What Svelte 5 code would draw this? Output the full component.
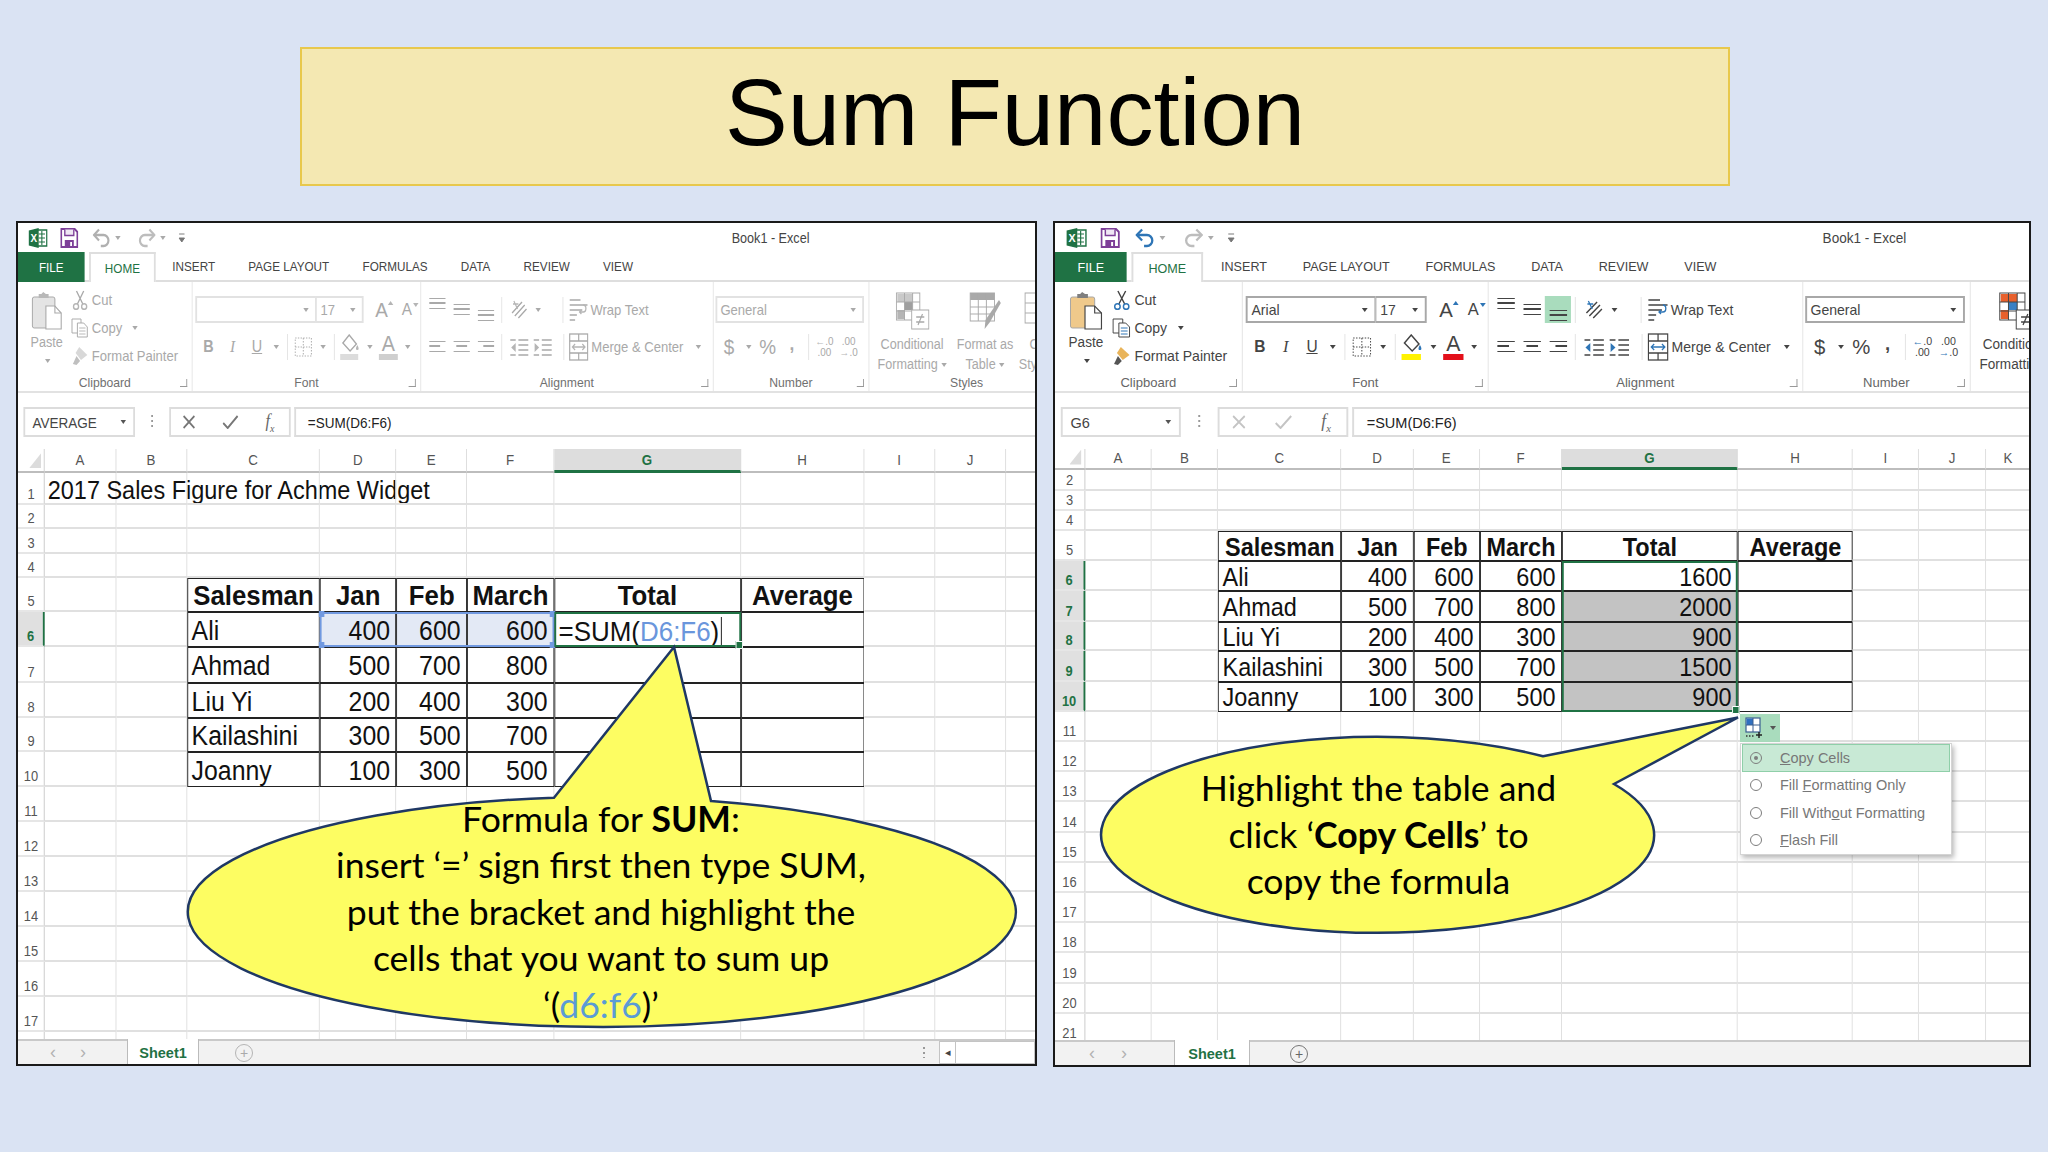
<script>
  const table = [
    ['Salesman', 'Jan', 'Feb', 'March', 'Total', 'Average'],
    ['Ali', 400, 600, 600, 1600],
    ['Ahmad', 500, 700, 800, 2000],
    ['Liu Yi', 200, 400, 300, 900],
    ['Kailashini', 300, 500, 700, 1500],
    ['Joanny', 100, 300, 500, 900]
  ];

  const leftWin = {
    id: 'left',
    off: true,
    gx: 0.92,
    head: 24,
    name: 'AVERAGE',
    fontName: '',
    labels: 'ABCDEFGHIJ ',
    cols: [27, 71, 71, 133, 76.5, 70.5, 87, 187, 123, 71, 71, 31],
    rows: [[1, 32], [2, 24], [3, 24.5], [4, 24], [5, 34.5], [6, 35], [7, 35.5], [8, 35], [9, 34.5], [10, 35], [11, 35], [12, 35], [13, 35], [14, 34.5], [15, 35], [16, 35.5], [17, 35], [18, 35]],
    selRows: [6],
    selCol: 6,
    box: '7 / 8 / 8 / 9',
    tabLeft: 109,
    nav: [32, 62]
  };

  const rightWin = {
    id: 'right',
    off: false,
    gx: 0.92,
    head: 20.5,
    name: 'G6',
    fontName: 'Arial',
    labels: 'ABCDEFGHIJK',
    cols: [30, 67, 66, 123.6, 72, 66.4, 82, 176, 115, 66, 67, 45],
    rows: [[2, 21], [3, 20.5], [4, 20], [5, 30], [6, 30.4], [7, 30.2], [8, 29.8], [9, 30.2], [10, 30.4], [11, 30], [12, 30], [13, 30.4], [14, 30.2], [15, 30.2], [16, 30.2], [17, 30], [18, 30], [19, 30.6], [20, 30.4], [21, 30]],
    selRows: [6, 7, 8, 9, 10],
    selCol: 6,
    box: '6 / 8 / 11 / 9',
    tabLeft: 119,
    nav: [34, 66]
  };

  function cellsFor(w) {
    const out = [];
    w.rows.forEach(([n], i) => {
      const r = i + 2;
      const t = n >= 5 && n <= 10 ? table[n - 5] : null;
      out.push({ key: 'h' + n, r, c: 1, cls: 'rh' + (w.selRows.includes(n) ? ' picked' : ''), text: n });
      w.cols.forEach((_, j) => {
        let cls = 'cell';
        let text = '';
        let formula = false;
        if (t && j >= 2 && j <= 7) {
          text = t[j - 2] ?? '';
          cls += ' tb';
          if (n === 5) cls += ' hd';
          else if (j === 2) cls += ' nm';
          else cls += ' num';
          if (w.off && j === 6 && n !== 5) text = '';
          if (w.off && n === 6 && j === 6) { formula = true; cls += ' fm'; }
          if (w.off && n === 6 && j >= 3 && j <= 5) cls += ' lit';
          if (!w.off && n >= 7 && j === 6) cls += ' grey';
        }
        if (w.off && n === 1 && j === 0) { text = '2017 Sales Figure for Achme Widget'; cls += ' ttl'; }
        out.push({ key: n + '-' + j, r, c: j + 2, cls, text, formula });
      });
    });
    return out;
  }

  const px = (list) => list.join('px ') + 'px';
</script>

{#snippet excel(w)}
  <section class="win {w.id}" class:off={w.off} class:on={!w.off}>
    <div class="chrome">
      <div class="titlebar">
        <div class="qat">
          <svg class="xl" width="22" height="20" viewBox="0 0 22 20">
            <rect x="8" y="2" width="13" height="16" fill="#fff" stroke="#1f7244" stroke-width="1.5" />
            <path d="M12 6h7M12 10h7M12 14h7M15.5 3v14" stroke="#1f7244" stroke-width="1.2" />
            <path d="M1 2.5 12 0v20L1 17.5z" fill="#1f7244" />
            <text x="6.5" y="14" font-size="11" font-weight="700" fill="#fff" text-anchor="middle">X</text>
          </svg>
          <svg class="save" width="20" height="20" viewBox="0 0 20 20">
            <path d="M1 1h15l3 3v15H1z" fill="#fff" stroke="#7d3f98" stroke-width="2" />
            <path d="M5 1.5v6h10v-6" fill="#efe6f3" stroke="#7d3f98" stroke-width="1.5" />
            <rect x="5" y="12" width="10" height="7" fill="#7d3f98" />
            <rect x="11" y="14" width="2" height="4" fill="#fff" />
          </svg>
          <svg class="undo" width="20" height="20" viewBox="0 0 20 20">
            <path d="M2 7h10a5 5 0 0 1 0 11H9" fill="none" stroke="currentColor" stroke-width="2.4" />
            <path d="M7 1.5 1.5 7 7 12.5" fill="none" stroke="currentColor" stroke-width="2.4" />
          </svg>
          <i class="arr tiny"></i>
          <svg class="redo" width="20" height="20" viewBox="0 0 20 20">
            <path d="M18 7H8a5 5 0 0 0 0 11h3" fill="none" stroke="currentColor" stroke-width="2.4" />
            <path d="M13 1.5 18.5 7 13 12.5" fill="none" stroke="currentColor" stroke-width="2.4" />
          </svg>
          <i class="arr tiny"></i>
          <svg class="cust" width="8" height="12" viewBox="0 0 8 12">
            <path d="M1 2h6M1 6h6l-3 4z" fill="#777" stroke="#777" />
          </svg>
        </div>
        <span class="doc">Book1 - Excel</span>
      </div>

      <nav class="tabs">
        <span class="file">FILE</span>
        <span class="home">HOME</span>
        <span>INSERT</span>
        <span>PAGE LAYOUT</span>
        <span>FORMULAS</span>
        <span>DATA</span>
        <span>REVIEW</span>
        <span>VIEW</span>
      </nav>

      <div class="ribbon">
        <div class="group clip">
          <div class="g-body clip-body">
            <div class="paste">
              <svg width="38" height="38" viewBox="0 0 38 38">
                <rect x="2" y="5" width="25" height="31" rx="2" class="board" />
                <path d="M9 6V2h3l2-2 3 2h3v4z" class="clipper" />
                <path d="M17 14h10l7 7v16H17z" fill="#fff" stroke="currentColor" stroke-width="1.2" />
                <path d="M27 14v7h7" fill="none" stroke="currentColor" stroke-width="1.2" />
              </svg>
              <span>Paste</span>
              <i class="arr"></i>
            </div>
            <div class="clip-rows">
              <div class="crow">
                <svg width="20" height="20" viewBox="0 0 20 20">
                  <path d="M6 1l7 13M14 1 7 14" stroke="currentColor" stroke-width="1.5" fill="none" />
                  <circle cx="5.5" cy="16.5" r="2.8" fill="none" stroke="var(--blue)" stroke-width="1.5" />
                  <circle cx="14.5" cy="16.5" r="2.8" fill="none" stroke="var(--blue)" stroke-width="1.5" />
                </svg>
                Cut
              </div>
              <div class="crow">
                <svg width="20" height="20" viewBox="0 0 20 20">
                  <path d="M1 1h10v14H1z" fill="#fff" stroke="currentColor" />
                  <path d="M7 5h7l4 4v10H7z" fill="#fff" stroke="currentColor" />
                  <path d="M9 10h7M9 13h7M9 16h7" stroke="var(--blue)" />
                </svg>
                Copy <i class="arr copy-arr"></i>
              </div>
              <div class="crow">
                <svg width="20" height="20" viewBox="0 0 20 20">
                  <path d="M9 1l9 8-7 5-6-7z" class="brush" />
                  <path d="M6 10l4 5-4 4-4-1z" class="brush-2" />
                </svg>
                Format Painter
              </div>
            </div>
          </div>
          <div class="g-label">Clipboard<i class="launch"></i></div>
        </div>

        <div class="group font">
          <div class="g-body g-rows">
            <div class="irow first">
              <div class="box fname"><span>{w.fontName}</span><i class="arr"></i></div>
              <div class="box fsize"><span>17</span><i class="arr"></i></div>
              <span class="aa big">A<b class="tip"></b></span>
              <span class="aa small">A<b class="tip down"></b></span>
            </div>
            <div class="irow">
              <span class="t27 strong">B</span>
              <span class="t27 em">I</span>
              <span class="t27 und">U</span>
              <span class="t16"><i class="arr"></i></span>
              <i class="sep"></i>
              <span class="t30">
                <svg width="20" height="20" viewBox="0 0 20 20">
                  <rect x="1" y="1" width="18" height="18" fill="none" stroke="currentColor" stroke-dasharray="1.5 1.5" />
                  <path d="M10 1v18M1 10h18" stroke="currentColor" stroke-dasharray="1.5 1.5" />
                </svg>
              </span>
              <span class="t16"><i class="arr"></i></span>
              <i class="sep"></i>
              <span class="t30">
                <svg width="24" height="26" viewBox="0 0 24 26">
                  <path d="M11 1l8 9-7 7-8-8z" fill="#fff" stroke="currentColor" stroke-width="1.5" />
                  <path d="M20 11c2 3 2 5 0 5s-2-2 0-5z" fill="var(--blue)" />
                  <rect x="1" y="20" width="20" height="6" fill="var(--yellow)" />
                </svg>
              </span>
              <span class="t16"><i class="arr"></i></span>
              <span class="t27 col-a">A<b class="red-bar"></b></span>
              <span class="t16"><i class="arr"></i></span>
            </div>
          </div>
          <div class="g-label">Font<i class="launch"></i></div>
        </div>

        <div class="group align">
          <div class="g-body g-rows">
            <div class="irow">
              <span class="t27"><i class="lines top"></i></span>
              <span class="t27"><i class="lines"></i></span>
              <span class="t27" class:hi={!w.off}><i class="lines low"></i></span>
              <i class="sep wide"></i>
              <span class="t27">
                <svg width="22" height="22" viewBox="0 0 22 22">
                  <path d="M3 14 14 3M6 17 17 6M10 19l9-9" stroke="currentColor" stroke-width="1.5" fill="none" />
                  <path d="M4 5h6M5 2l4 8" stroke="var(--blue)" stroke-width="1.3" fill="none" />
                </svg>
              </span>
              <span class="t16"><i class="arr"></i></span>
              <i class="sep wide2"></i>
              <span class="wrap-ic">
                <svg width="22" height="24" viewBox="0 0 22 24">
                  <path d="M2 2h12M2 7h20M2 12h14M2 17h8M2 22h6" stroke="currentColor" stroke-width="1.5" fill="none" />
                  <path d="M17 7c4 0 4 7 0 7h-4m2-2-2 2 2 2" stroke="var(--blue)" stroke-width="1.4" fill="none" />
                </svg>
              </span>
              <span class="lbl">Wrap Text</span>
            </div>
            <div class="irow">
              <span class="t27"><i class="lines left-a"></i></span>
              <span class="t27"><i class="lines mid-a"></i></span>
              <span class="t27"><i class="lines right-a"></i></span>
              <i class="sep wide"></i>
              <span class="t27">
                <svg width="22" height="18" viewBox="0 0 22 18">
                  <path d="M10 2h11M10 7h11M10 12h11M10 17h11M1 2h6M1 17h6" stroke="currentColor" stroke-width="1.4" />
                  <path d="M7 5 2 9.5 7 14z" fill="var(--blue)" />
                </svg>
              </span>
              <span class="t27 ind">
                <svg width="22" height="18" viewBox="0 0 22 18">
                  <path d="M10 2h11M10 7h11M10 12h11M10 17h11M1 2h6M1 17h6" stroke="currentColor" stroke-width="1.4" />
                  <path d="M2 5l5 4.5L2 14z" fill="var(--blue)" />
                </svg>
              </span>
              <i class="sep wide3"></i>
              <span class="wrap-ic">
                <svg width="22" height="28" viewBox="0 0 22 28">
                  <rect x="1" y="1" width="20" height="26" fill="none" stroke="currentColor" stroke-width="1.3" />
                  <path d="M1 8h20M1 20h20M11 1v7M11 20v7" stroke="currentColor" stroke-width="1.3" />
                  <path d="M4 14h14M7 11l-3 3 3 3M15 11l3 3-3 3" stroke="var(--blue)" stroke-width="1.3" fill="none" />
                </svg>
              </span>
              <span class="lbl">Merge &amp; Center</span>
              <i class="arr merge-arr"></i>
            </div>
          </div>
          <div class="g-label">Alignment<i class="launch"></i></div>
        </div>

        <div class="group number">
          <div class="g-body g-rows">
            <div class="irow">
              <div class="box general"><span>General</span><i class="arr"></i></div>
            </div>
            <div class="irow">
              <span class="t27 cash">$</span>
              <span class="t16"><i class="arr"></i></span>
              <span class="t27 cash">%</span>
              <span class="t27 cash cm">,</span>
              <i class="sep"></i>
              <span class="dec"><b><em>←</em>.0</b><b>.00</b></span>
              <span class="dec"><b>.00</b><b><em>→</em>.0</b></span>
            </div>
          </div>
          <div class="g-label">Number<i class="launch"></i></div>
        </div>

        <div class="group styles">
          <div class="g-body style-row">
            <div class="sty">
              <svg width="38" height="38" viewBox="0 0 38 38">
                <rect x="1" y="1" width="26" height="27" fill="#fff" stroke="currentColor" />
                <rect x="2" y="2" width="8" height="8" class="c1" />
                <rect x="10" y="10" width="9" height="8" class="c2" />
                <rect x="10" y="2" width="9" height="8" class="c1" />
                <rect x="2" y="18" width="8" height="9" class="c3" />
                <path d="M10 1v27M19 1v27M1 10h26M1 19h26" stroke="currentColor" />
                <rect x="18" y="18" width="19" height="19" fill="#fff" stroke="currentColor" />
                <path d="M23 25h9M23 30h9M30 22l-5 11" stroke="currentColor" stroke-width="1.3" fill="none" />
              </svg>
              <span>Conditional</span>
              <span>Formatting <i class="arr inline"></i></span>
            </div>
            <div class="sty">
              <svg width="38" height="38" viewBox="0 0 38 38">
                <rect x="2" y="1" width="27" height="28" fill="#fff" stroke="currentColor" />
                <rect x="2" y="1" width="27" height="7" fill="currentColor" />
                <path d="M11 1v28M20 1v28M2 15h27M2 22h27" stroke="currentColor" />
                <path d="M34 8 36 11 24 30 18 37l1-9z" fill="currentColor" />
              </svg>
              <span>Format as</span>
              <span>Table <i class="arr inline"></i></span>
            </div>
            <div class="sty narrow">
              <svg width="38" height="38" viewBox="0 0 38 38">
                <rect x="2" y="1" width="34" height="30" fill="#fff" stroke="currentColor" />
                <path d="M2 11h34M2 21h34M18 1v30" stroke="currentColor" />
              </svg>
              <span>Cell</span>
              <span>Styles <i class="arr inline"></i></span>
            </div>
          </div>
          <div class="g-label">Styles</div>
        </div>
      </div>

      <div class="formula">
        <div class="namebox"><span>{w.name}</span><i class="arr dark"></i></div>
        <i class="dots"></i>
        <div class="btns">
          <svg class="x" width="14" height="14" viewBox="0 0 14 14"><path d="M1 1l12 12M13 1 1 13" stroke="currentColor" stroke-width="1.8" /></svg>
          <svg class="x" width="18" height="14" viewBox="0 0 18 14"><path d="M1 8l5 5L17 1" fill="none" stroke="currentColor" stroke-width="2" /></svg>
          <span class="fx">f<sub>x</sub></span>
        </div>
        <div class="input">=SUM(D6:F6)</div>
      </div>
    </div>

    <div class="sheet">
      <div class="grid" style="--gx:{w.gx}; grid-template-columns:{px(w.cols.map((c) => c / w.gx))}; grid-template-rows:{w.head}px {px(w.rows.map((r) => r[1]))}">
        <div class="corner" style="grid-area:1 / 1"><i></i></div>
        {#each w.cols as _, j}
          <div class="ch" class:picked={j === w.selCol} style="grid-area:1 / {j + 2}">{w.labels[j] ?? ''}</div>
        {/each}
        {#each cellsFor(w) as cell (cell.key)}
          <div class={cell.cls} style="grid-area:{cell.r} / {cell.c}">
            {#if cell.formula}
              <span class="fml">=SUM(<span class="ref">D6:F6</span>)<i class="caret"></i></span>
            {:else}
              {cell.text}
            {/if}
          </div>
        {/each}
        {#if w.off}
          <div class="refbox" style="grid-area:7 / 5 / 8 / 8">
            <i class="nub tl"></i><i class="nub tr"></i><i class="nub bl"></i><i class="nub br"></i>
          </div>
        {/if}
        <div class="selbox" style="grid-area:{w.box}"><i class="grip"></i></div>
      </div>
    </div>

    <footer class="sheetbar">
      <div class="navs" style="width:{w.tabLeft}px">
        <span style="left:{w.nav[0]}px" class="nv">‹</span>
        <span style="left:{w.nav[1]}px" class="nv">›</span>
      </div>
      <div class="tab">Sheet1</div>
      <span class="plus">+</span>
      {#if w.off}
        <div class="hscroll"><i></i><span class="sl">◂</span><span class="thumb"></span></div>
      {/if}
    </footer>

    {#if w.off}
      <div class="callout big-call">
        <svg width="828" height="230" viewBox="0 0 828 230">
          <path d="M367 0.7 L487 -150 L524 4 A414 115 0 1 1 367 0.7 Z" />
        </svg>
        <p>Formula for <b>SUM</b>:<br />insert ‘=’ sign first then type SUM,<br />put the bracket and highlight the<br />cells that you want to sum up<br />‘(<span class="link">d6:f6</span>)’</p>
      </div>
    {:else}
      <div class="fillopts">
        <div class="fillbtn">
          <svg width="20" height="22" viewBox="0 0 20 22">
            <rect x="1" y="1" width="14" height="14" fill="#fff" stroke="#3b5f8f" stroke-width="1.2" />
            <rect x="1.5" y="1.5" width="6.5" height="6.5" fill="#2f6fc0" />
            <path d="M8 1v14M1 8h14" stroke="#3b5f8f" />
            <path d="M14 15v6M11 18h6" stroke="#222" stroke-width="1.5" />
            <path d="M1 19h8" stroke="#333" stroke-dasharray="1.5 1.5" stroke-width="1.5" />
          </svg>
          <i class="arr dark"></i>
        </div>
        <ul class="menu">
          <li class="active"><i class="radio"></i><span><u>C</u>opy Cells</span></li>
          <li><i class="radio"></i><span>Fill <u>F</u>ormatting Only</span></li>
          <li><i class="radio"></i><span>Fill With<u>o</u>ut Formatting</span></li>
          <li><i class="radio"></i><span><u>F</u>lash Fill</span></li>
        </ul>
      </div>
      <div class="callout small-call">
        <svg width="553" height="196" viewBox="0 0 553 196">
          <path d="M441 19.3 L636 -19.5 L512 47 A276.5 98 0 1 1 441 19.3 Z" />
        </svg>
        <p>Highlight the table and<br />click ‘<b>Copy Cells</b>’ to<br />copy the formula</p>
      </div>
    {/if}
  </section>
{/snippet}

<main class="slide">
  <header class="banner"><h1>Sum Function</h1></header>
  <div class="pair">
    {@render excel(leftWin)}
    {@render excel(rightWin)}
  </div>
</main>

<style>
  :global(body) {
    margin: 0;
    background: #dae3f3;
  }

  .slide {
    width: 2048px;
    height: 1152px;
    overflow: hidden;
    background: #dae3f3;
    font-family: "Liberation Sans", Arial, sans-serif;
    color: #000;
  }

  .banner {
    box-sizing: border-box;
    width: 1430px;
    height: 139px;
    margin: 47px 0 0 300px;
    padding-bottom: 7px;
    background: #f4e8b2;
    border: 2px solid #e8c84c;
    display: flex;
    align-items: center;
    justify-content: center;
  }

  h1 {
    margin: 0;
    font-size: 94px;
    font-weight: 400;
    line-height: 1;
  }

  .pair {
    display: flex;
    align-items: flex-start;
    gap: 16px;
    margin: 35px 0 0 16px;
  }

  .win {
    position: relative;
    box-sizing: border-box;
    display: flex;
    flex-direction: column;
    flex: none;
    overflow: hidden;
    background: #fff;
    border: 2px solid #1a1a1a;
  }

  .left {
    width: 1021px;
    height: 845px;
    --cx: 0.9;
  }

  .right {
    width: 978px;
    height: 846px;
    --cx: 0.968;
  }

  .off {
    --ink: #a9a9a9;
    --lab: #707070;
    --blue: #b5b5b5;
    --yellow: #dcdcdc;
    --red: #cfcfcf;
    --board: #e4e4e4;
    --clipper: #b8b8b8;
    --box: #e2e2e2;
    --c1: #c9c9c9;
    --c2: #9f9f9f;
    --c3: #b5b5b5;
    --brush: #bfbfbf;
    --brush2: #d8d8d8;
    --undo: #b0b0b0;
    --x: #777;
  }

  .on {
    --ink: #444;
    --lab: #666;
    --blue: #2e75b6;
    --yellow: #fff200;
    --red: #e3101a;
    --board: #efc98b;
    --clipper: #7f7f7f;
    --box: #a8a8a8;
    --c1: #e8602c;
    --c2: #3a80c4;
    --c3: #e8602c;
    --brush: #555;
    --brush2: #e9b45a;
    --undo: #2e75b6;
    --x: #c4c4c4;
  }

  .chrome {
    flex: none;
    width: calc(100% / var(--cx));
    height: 226px;
    transform: scaleX(var(--cx));
    transform-origin: 0 0;
    color: var(--ink);
  }

  .titlebar {
    height: 29px;
    display: flex;
    align-items: center;
    font-size: 14px;
    color: #444;
  }

  .qat {
    flex: none;
    width: 200px;
    display: flex;
    align-items: center;
    padding-left: 11px;
    box-sizing: border-box;
  }

  .qat svg {
    flex: none;
  }

  .xl {
    margin-right: 14px;
  }

  .save {
    margin-right: 16px;
  }

  .undo {
    color: var(--undo);
  }

  .redo {
    color: #bdbdbd;
    margin-left: 19px;
  }

  .cust {
    margin-left: 14px;
  }

  .doc {
    margin-left: 593px;
    white-space: nowrap;
  }

  .tabs {
    height: 30px;
    display: flex;
    align-items: stretch;
    font-size: 13px;
    color: #444;
    border-bottom: 2px solid #dedede;
    box-sizing: border-box;
  }

  .tabs span {
    display: flex;
    align-items: center;
    padding: 0 18.5px;
    white-space: nowrap;
  }

  .tabs .file {
    width: 74px;
    padding: 0;
    justify-content: center;
    margin-right: 5px;
    margin-bottom: -2px;
    background: #1f7244;
    color: #fff;
  }

  .tabs .home {
    width: 74px;
    padding: 0;
    justify-content: center;
    box-sizing: border-box;
    margin-bottom: -2px;
    background: #fff;
    color: #1f7244;
    border: 2px solid #dedede;
    border-bottom: 0;
  }

  .ribbon {
    height: 111px;
    display: flex;
    border-bottom: 2px solid #e2e2e2;
    box-sizing: border-box;
  }

  .group {
    flex: none;
    box-sizing: border-box;
    display: flex;
    flex-direction: column;
    border-right: 1px solid #e4e4e4;
  }

  .clip { width: 194px; }
  .font { width: 254px; }
  .align { width: 324.5px; }
  .number { width: 173.5px; }
  .styles { width: 216px; border-right: 0; }

  .g-body {
    flex: 1;
    min-height: 0;
  }

  .g-label {
    position: relative;
    height: 17px;
    text-align: center;
    font-size: 13.5px;
    line-height: 17px;
    color: var(--lab);
  }

  .launch {
    position: absolute;
    right: 5px;
    top: 5px;
    width: 7px;
    height: 7px;
    border-left: 1px solid #999;
    border-top: 1px solid #999;
    transform: rotate(180deg);
  }

  .arr {
    display: inline-block;
    flex: none;
    width: 0;
    height: 0;
    border-left: 3.5px solid transparent;
    border-right: 3.5px solid transparent;
    border-top: 4px solid var(--ink);
  }

  .arr.dark {
    border-top-color: #555;
  }

  .arr.tiny {
    margin-left: 5px;
    border-top-color: #aaa;
  }

  .arr.inline {
    vertical-align: middle;
  }

  .clip-body {
    display: flex;
    font-size: 14.5px;
    padding-top: 4px;
  }

  .paste {
    width: 60px;
    flex: none;
    box-sizing: border-box;
    padding: 6px 0 0 14px;
    display: flex;
    flex-direction: column;
    gap: 4px;
    font-size: 14px;
  }

  .paste .arr {
    margin: 5px 0 0 16px;
  }

  .board { fill: var(--board); stroke: #a5a5a5; }
  .clipper { fill: var(--clipper); }
  .brush { fill: var(--brush2); }
  .brush-2 { fill: var(--brush); }

  .clip-rows {
    display: flex;
    flex-direction: column;
    margin-left: -1px;
  }

  .crow {
    height: 28px;
    display: flex;
    align-items: center;
    gap: 3px;
    white-space: nowrap;
  }

  .copy-arr {
    margin-left: 8px;
  }

  .g-rows {
    display: flex;
    flex-direction: column;
    gap: 10px;
    padding-top: 14px;
  }

  .irow {
    height: 27px;
    display: flex;
    align-items: center;
    font-size: 14.5px;
    white-space: nowrap;
  }

  .font .irow {
    padding-left: 4px;
  }

  .font .irow.first {
    padding-left: 1px;
  }

  .font .sep {
    margin: 0 3.5px;
  }

  .align .irow {
    padding-left: 4px;
  }

  .box {
    box-sizing: border-box;
    height: 27px;
    display: flex;
    align-items: center;
    justify-content: space-between;
    padding: 0 7px 0 4px;
    border: 2px solid var(--box);
  }

  .fname {
    width: 134px;
    margin-left: 2px;
    border-right-width: 1px;
  }

  .fsize {
    width: 53px;
    border-left-width: 1px;
  }

  .general {
    width: 165px;
    margin-left: 2px;
  }

  .aa {
    position: relative;
    font-size: 21px;
    width: 28px;
    text-align: center;
  }

  .aa.big { margin-left: 6px; }
  .aa.small { font-size: 17px; }

  .tip {
    position: absolute;
    right: 1px;
    top: 3px;
    border-left: 3px solid transparent;
    border-right: 3px solid transparent;
    border-bottom: 4px solid var(--blue);
  }

  .tip.down {
    border-bottom: 0;
    border-top: 4px solid var(--blue);
  }

  .t27, .t30, .t16 {
    flex: none;
    display: flex;
    align-items: center;
    justify-content: center;
    height: 27px;
  }

  .t27 { width: 27px; }
  .t30 { width: 28px; }
  .t16 { width: 16px; }

  .hi { background: #a9dcbd; }

  .strong { font-weight: 700; font-size: 16px; }
  .em { font-style: italic; font-family: "Liberation Serif", serif; font-size: 17px; }
  .und { text-decoration: underline; font-size: 16px; }

  .col-a {
    font-size: 22px;
    line-height: 20px;
    margin-left: -1px;
    flex-direction: column;
  }

  .red-bar {
    display: block;
    width: 21px;
    height: 6px;
    background: var(--red);
  }

  .sep {
    flex: none;
    width: 1px;
    height: 26px;
    margin: 0 4px;
    background: #e3e3e3;
  }

  .sep.wide { margin: 0 5px 0 4px; }
  .sep.wide2 { margin: 0 4px 0 19px; }
  .sep.wide3 { margin: 0 4px 0 10px; }

  .lines {
    display: block;
    width: 18px;
    height: 11px;
    border-top: 1.5px solid var(--ink);
    border-bottom: 1.5px solid var(--ink);
    position: relative;
    box-sizing: border-box;
  }

  .lines::after {
    content: "";
    position: absolute;
    left: 0;
    right: 0;
    top: 3px;
    height: 1.5px;
    background: var(--ink);
  }

  .lines.top { transform: translateY(-6px); }
  .lines.low { transform: translateY(6px); }
  .lines.left-a::after { right: 6px; }
  .lines.mid-a::after { left: 3px; right: 3px; }
  .lines.right-a::after { left: 6px; }

  .ind { margin-left: -1px; }

  .wrap-ic {
    flex: none;
    width: 24px;
    display: flex;
    justify-content: center;
  }

  .lbl {
    margin-left: 2px;
  }

  .merge-arr {
    margin-left: 14px;
  }

  .number .irow:last-child {
    padding-left: 4px;
  }

  .cash {
    font-size: 21px;
  }

  .cm { font-size: 19px; font-weight: 700; margin-top: -5px; }

  .dec {
    display: flex;
    flex-direction: column;
    align-items: center;
    width: 27px;
    font-size: 11px;
    line-height: 11px;
  }

  .dec b {
    font-weight: 400;
  }

  .dec em {
    font-style: normal;
    color: var(--blue);
  }

  .style-row {
    display: flex;
    padding: 10px 0 0 7px;
    font-size: 14px;
    line-height: 20px;
    text-align: center;
  }

  .sty {
    flex: none;
    width: 81px;
    display: flex;
    flex-direction: column;
    align-items: center;
    white-space: nowrap;
  }

  .sty.narrow { width: 42px; }

  .sty svg {
    margin-bottom: 4px;
  }

  .c1 { fill: var(--c1); }
  .c2 { fill: var(--c2); }
  .c3 { fill: var(--c3); }

  .formula {
    height: 56px;
    display: flex;
    align-items: flex-start;
    padding: 14px 0 0 6px;
    box-sizing: border-box;
    font-size: 15px;
    color: #444;
  }

  .namebox, .btns, .input {
    box-sizing: border-box;
    height: 30px;
    display: flex;
    align-items: center;
    border: 2px solid #dcdcdc;
  }

  .namebox {
    width: 124px;
    justify-content: space-between;
    padding: 0 8px;
  }

  .dots {
    width: 2px;
    height: 14px;
    margin: 8px 18px 0 18px;
    background: repeating-linear-gradient(#999 0 2px, transparent 2px 5px);
  }

  .btns {
    width: 135px;
    padding: 0 16px 0 13px;
    justify-content: space-between;
  }

  .x {
    color: var(--x);
  }

  .fx {
    font-family: "Liberation Serif", serif;
    font-style: italic;
    font-size: 18px;
    color: #666;
  }

  .fx sub {
    font-size: 11px;
  }

  .input {
    flex: 1;
    margin-left: 4px;
    padding-left: 13px;
    border-right: 0;
    color: #222;
  }

  .sheet {
    flex: 1;
    min-height: 0;
    overflow: hidden;
  }

  .grid {
    display: grid;
    width: max-content;
    transform: scaleX(var(--gx));
    transform-origin: 0 0;
  }

  .left .grid { --fs: 27px; --fb: 28px; --pt: 4px; }
  .right .grid { --fs: 25.5px; --fb: 25.5px; --pt: 2px; }

  .corner {
    border-right: 1px solid #cfcfcf;
    border-bottom: 2px solid #bdbdbd;
    display: flex;
    align-items: flex-end;
    justify-content: flex-end;
    padding: 0 3px 3px 0;
  }

  .corner i {
    width: 13px;
    height: 15px;
    background: #dcdcdc;
    clip-path: polygon(100% 0, 100% 100%, 0 100%);
  }

  .ch {
    display: flex;
    align-items: center;
    justify-content: center;
    font-size: 14.5px;
    color: #555;
    border-right: 1px solid #dcdcdc;
    border-bottom: 2px solid #bdbdbd;
  }

  .ch.picked {
    background: #dddddd;
    color: #1f7244;
    font-weight: 700;
    border-bottom: 3px solid #1f7244;
  }

  .rh {
    display: flex;
    align-items: flex-end;
    justify-content: center;
    padding-bottom: 1px;
    font-size: 14px;
    color: #555;
    border-right: 1px solid #c8c8c8;
    border-bottom: 2px solid #e6e6e6;
  }

  .rh.picked {
    background: #e0e0e0;
    color: #1f7244;
    font-weight: 700;
    border-right: 2px solid #1f7244;
  }

  .cell {
    display: flex;
    align-items: center;
    box-sizing: border-box;
    min-width: 0;
    border-right: 1px solid #dedede;
    border-bottom: 2px solid #e0e0e0;
    font-size: var(--fs);
    color: #111;
    white-space: nowrap;
  }

  .tb {
    border: 0;
    box-shadow: inset 0 0 0 1px #222;
    padding: var(--pt) 7px 0 5px;
  }

  .hd {
    justify-content: center;
    font-weight: 700;
    font-size: var(--fb);
    padding: 2px 0 0;
  }

  .num {
    justify-content: flex-end;
  }

  .fm {
    justify-content: flex-start;
    padding-left: 5px;
  }

  .lit {
    background: #e3e9f5;
  }

  .grey {
    background: #c3c3c3;
  }

  .ttl {
    padding: 4px 0 0 3px;
    font-size: 25.5px;
  }

  .fml {
    position: relative;
    display: flex;
    align-items: center;
    font-size: 28.2px;
  }

  .ref {
    color: #6a96dc;
  }

  .caret {
    width: 1px;
    height: 30px;
    margin-left: 2px;
    background: #111;
  }

  .refbox {
    position: relative;
    border: 2px solid #7199e0;
    pointer-events: none;
  }

  .nub {
    position: absolute;
    width: 6px;
    height: 6px;
    background: #7199e0;
  }

  .nub.tl { left: -3px; top: -3px; }
  .nub.tr { right: -3px; top: -3px; }
  .nub.bl { left: -3px; bottom: -3px; }
  .nub.br { right: -3px; bottom: -3px; }

  .selbox {
    position: relative;
    border: 2px solid #1f7244;
    pointer-events: none;
  }

  .grip {
    position: absolute;
    right: -4px;
    bottom: -4px;
    width: 6px;
    height: 6px;
    background: #1f7244;
    border: 1px solid #fff;
  }

  .sheetbar {
    flex: none;
    box-sizing: border-box;
    height: 25px;
    display: flex;
    align-items: stretch;
    background: #f2f2f2;
    border-top: 2px solid #c9c9c9;
    font-size: 14.5px;
  }

  .navs {
    position: relative;
    flex: none;
  }

  .nv {
    position: absolute;
    top: 1px;
    color: #b3b3b3;
    font-size: 18px;
    line-height: 20px;
  }

  .tab {
    flex: none;
    width: 72px;
    box-sizing: border-box;
    padding-top: 3px;
    display: flex;
    align-items: center;
    justify-content: center;
    background: #fff;
    color: #1f7244;
    font-weight: 700;
    border-left: 1px solid #bbb;
    border-right: 1px solid #bbb;
    margin-top: -2px;
  }

  .right .tab {
    width: 76px;
  }

  .plus {
    flex: none;
    width: 18px;
    height: 18px;
    margin: 3px 0 0 36px;
    box-sizing: border-box;
    border: 1px solid #b5b5b5;
    border-radius: 50%;
    display: flex;
    align-items: center;
    justify-content: center;
    color: #aaa;
    font-size: 14px;
    line-height: 1;
  }

  .right .plus {
    margin-left: 40px;
    border-color: #777;
    color: #666;
  }

  .hscroll {
    margin-left: auto;
    display: flex;
    align-items: stretch;
    width: 112px;
  }

  .hscroll i {
    width: 2px;
    margin: 6px 14px 6px 0;
    background: repeating-linear-gradient(#999 0 2px, transparent 2px 5px);
  }

  .sl {
    width: 15px;
    font-size: 11px;
    color: #444;
    border: 1px solid #c4c4c4;
    text-align: center;
    line-height: 20px;
    background: #fff;
  }

  .thumb {
    flex: 1;
    background: #fff;
    border: 1px solid #c4c4c4;
    border-left: 0;
  }

  .callout {
    position: absolute;
    display: flex;
    align-items: center;
    justify-content: center;
  }

  .callout svg {
    position: absolute;
    left: 0;
    top: 0;
    overflow: visible;
  }

  .callout path {
    fill: #fdfd62;
    stroke: #1f3864;
    stroke-width: 2.5;
    stroke-linejoin: miter;
  }

  .callout p {
    position: relative;
    margin: 0;
    text-align: center;
    white-space: nowrap;
    font-family: Lato, "Noto Sans", sans-serif;
    font-size: 35.6px;
    line-height: 46.4px;
    color: #000;
  }

  .link {
    color: #5b9bd5;
  }

  .big-call {
    left: 169px;
    top: 574px;
    width: 828px;
    height: 230px;
  }

  .small-call {
    left: 47px;
    top: 514px;
    width: 553px;
    height: 196px;
  }

  .fillopts {
    position: absolute;
    left: 685px;
    top: 491px;
    display: flex;
    flex-direction: column;
  }

  .fillbtn {
    width: 40px;
    height: 28px;
    background: #a9dcbd;
    display: flex;
    align-items: center;
    justify-content: center;
    gap: 5px;
  }

  .menu {
    width: 212px;
    margin: 1px 0 0 0;
    padding: 0 1px;
    box-sizing: border-box;
    list-style: none;
    background: #fff;
    border: 1px solid #d4d4d4;
    box-shadow: 2px 3px 5px rgba(0, 0, 0, 0.28);
    font-size: 14.5px;
    color: #777;
  }

  .menu li {
    height: 27.5px;
    display: flex;
    align-items: center;
    padding-left: 8px;
    gap: 18px;
    white-space: nowrap;
  }

  .menu li.active {
    background: #c8e9d5;
    box-shadow: inset 0 0 0 1px #8fcfa9;
  }

  .radio {
    flex: none;
    width: 10px;
    height: 10px;
    border: 1.5px solid #7d7d7d;
    border-radius: 50%;
    position: relative;
  }

  .active .radio::after {
    content: "";
    position: absolute;
    left: 3px;
    top: 3px;
    width: 4px;
    height: 4px;
    border-radius: 50%;
    background: #7d7d7d;
  }
</style>
